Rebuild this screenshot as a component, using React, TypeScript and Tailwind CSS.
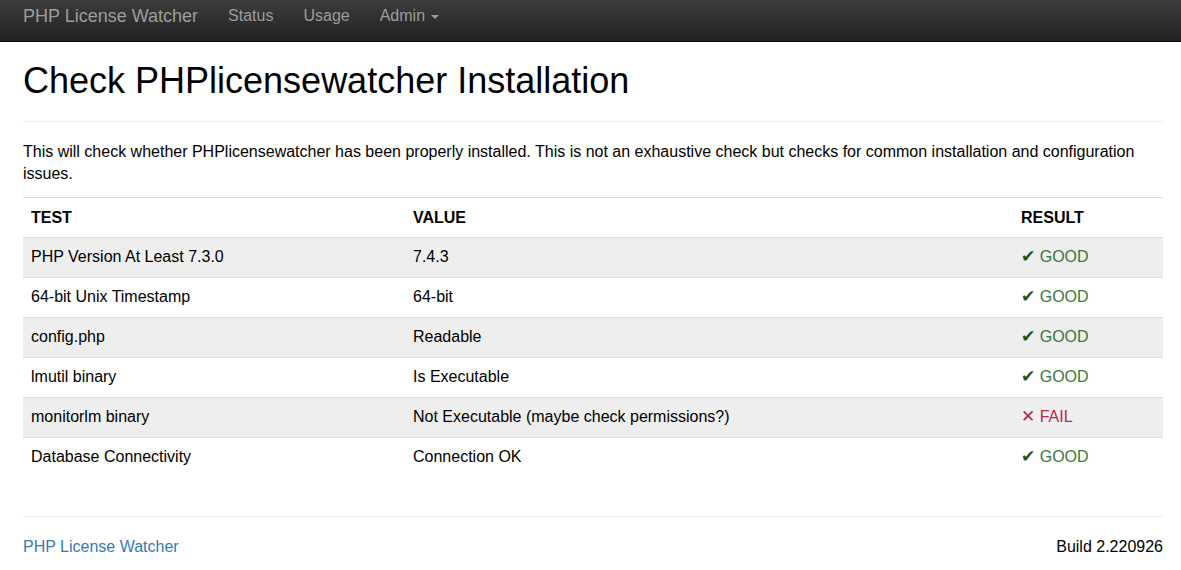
const rows: { test: string; value: string; ok: boolean }[] = [
  { test: "PHP Version At Least 7.3.0", value: "7.4.3", ok: true },
  { test: "64-bit Unix Timestamp", value: "64-bit", ok: true },
  { test: "config.php", value: "Readable", ok: true },
  { test: "lmutil binary", value: "Is Executable", ok: true },
  { test: "monitorlm binary", value: "Not Executable (maybe check permissions?)", ok: false },
  { test: "Database Connectivity", value: "Connection OK", ok: true },
];

export default function App() {
  return (
    <div className="min-h-[570px] bg-white text-black text-[16px] font-['Liberation_Sans',Arial,sans-serif]">
      {/* Navbar */}
      <nav className="h-[42px] bg-gradient-to-b from-[#3c3c3c] to-[#222] border-b border-[#080808]">
        <div className="flex pl-[8px] text-[#9d9d9d] leading-[22px] pt-[5px]">
          <a className="px-[15px] text-[18px]">PHP License Watcher</a>
          <a className="px-[15px]">Status</a>
          <a className="px-[15px]">Usage</a>
          <a className="px-[15px] flex items-center">
            Admin
            <span className="ml-[6px] mt-[2px] w-0 h-0 border-x-[4px] border-x-transparent border-t-[4px] border-t-[#9d9d9d]" />
          </a>
        </div>
      </nav>

      <div className="ml-[23px] w-[1140px]">
        <h1 className="mt-[19px] text-[36px] leading-[40px] h-[40px]">
          Check PHPlicensewatcher Installation
        </h1>
        <hr className="mt-[20px] border-t border-[#eee]" />

        <p className="mt-[19px] leading-[22px]">
          This will check whether PHPlicensewatcher has been properly installed. This is not an exhaustive check but
          checks for common installation and configuration issues.
        </p>

        <table className="mt-[12px] w-full border-collapse">
          <thead>
            <tr className="h-[40px] border-t border-[#ddd]">
              <th className="w-[382px] px-[8px] text-left font-bold">TEST</th>
              <th className="w-[608px] px-[8px] text-left font-bold">VALUE</th>
              <th className="px-[8px] text-left font-bold">RESULT</th>
            </tr>
          </thead>
          <tbody>
            {rows.map((r, i) => (
              <tr key={i} className={`h-[40px] border-t border-[#ddd] ${i % 2 === 0 ? "bg-[#eee]" : ""}`}>
                <td className="px-[8px] pb-[2px]">{r.test}</td>
                <td className="px-[8px] pb-[2px]">{r.value}</td>
                <td className="px-[8px] pb-[2px]">
                  {r.ok ? (
                    <span className="text-[#3c763d]">
                      <span className="text-[#1d5410] font-['DejaVu_Sans',sans-serif] text-[17px] leading-[16px]">✔</span> GOOD
                    </span>
                  ) : (
                    <span className="text-[#b8284a]">
                      <span className="font-bold font-['DejaVu_Sans',sans-serif] text-[17px] leading-[16px]">✕</span> FAIL
                    </span>
                  )}
                </td>
              </tr>
            ))}
          </tbody>
        </table>

        <hr className="mt-[38px] border-t border-[#eee]" />
        <footer className="flex justify-between mt-[19px] leading-[22px]">
          <a className="text-[#337ab7]">PHP License Watcher</a>
          <span>Build 2.220926</span>
        </footer>
      </div>
    </div>
  );
}
